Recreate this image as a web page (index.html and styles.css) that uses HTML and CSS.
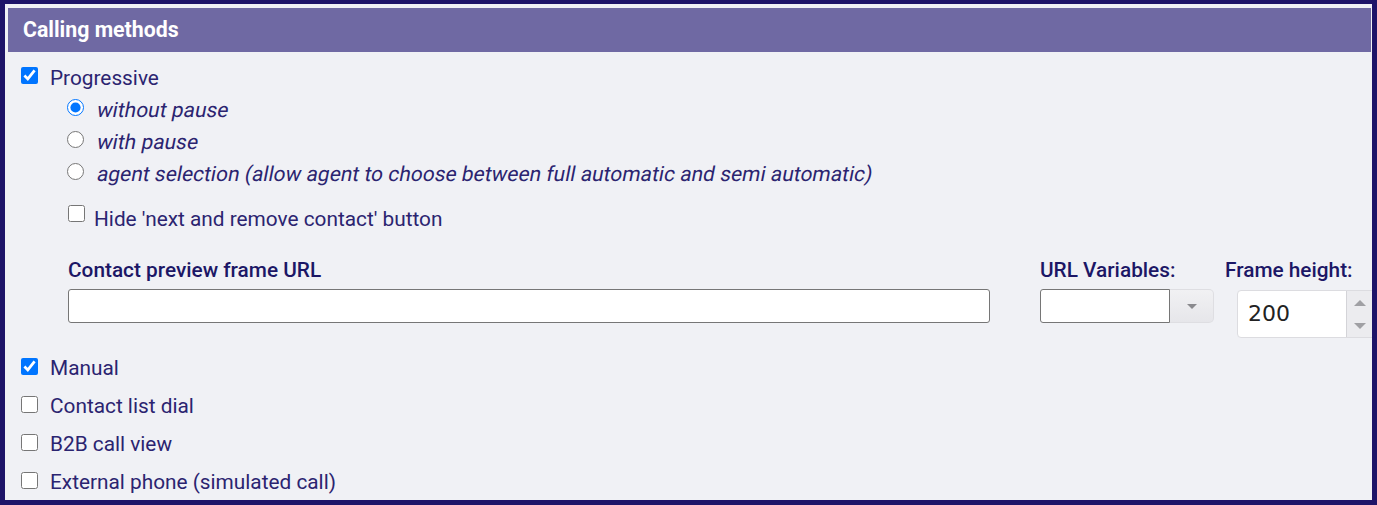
FILE: index.html
```html
<!DOCTYPE html>
<html lang="en">
<head>
    <meta charset="UTF-8">
    <meta name="viewport" content="width=device-width, initial-scale=1.0">
    <title>Calling methods</title>
    <link rel="stylesheet" href="styles.css">
</head>
<body>

<div class="panel">
    <div class="panel-header">Calling methods</div>

    <div class="panel-body">
        <label class="option">
            <input type="checkbox" checked>
            <span>Progressive</span>
        </label>

        <div class="sub-options">
            <label class="option radio">
                <input type="radio" name="progressiveMode" checked>
                <span>without pause</span>
            </label>
            <label class="option radio">
                <input type="radio" name="progressiveMode">
                <span>with pause</span>
            </label>
            <label class="option radio">
                <input type="radio" name="progressiveMode">
                <span>agent selection (allow agent to choose between full automatic and semi automatic)</span>
            </label>

            <label class="option hide-next">
                <input type="checkbox">
                <span>Hide 'next and remove contact' button</span>
            </label>

            <div class="fields">
                <div class="field field-url">
                    <div class="field-label">Contact preview frame URL</div>
                    <input type="text" class="text-input">
                </div>
                <div class="field field-vars">
                    <div class="field-label">URL Variables:</div>
                    <div class="select">
                        <div class="select-value"></div>
                        <div class="select-button"><span class="caret"></span></div>
                    </div>
                </div>
                <div class="field field-height">
                    <div class="field-label">Frame height:</div>
                    <div class="number">
                        <div class="number-value">200</div>
                        <div class="number-spin">
                            <span class="spin-up"></span>
                            <span class="spin-down"></span>
                        </div>
                    </div>
                </div>
            </div>
        </div>

        <div class="methods">
            <label class="option">
                <input type="checkbox" checked>
                <span>Manual</span>
            </label>
            <label class="option">
                <input type="checkbox">
                <span>Contact list dial</span>
            </label>
            <label class="option">
                <input type="checkbox">
                <span>B2B call view</span>
            </label>
            <label class="option">
                <input type="checkbox">
                <span>External phone (simulated call)</span>
            </label>
        </div>
    </div>
</div>

</body>
</html>
```

FILE: styles.css
```css
body {
    margin: 0;
    background-color: #1e1468;
    font-family: Roboto, "Liberation Sans", Arial, sans-serif;
    color: #2b2470;
}
.panel {
    margin: 4px 5px 5px 5px;
    height: 496px;
    background-color: #f0f1f5;
    overflow: hidden;
    padding: 4px 1px 0 3px;
    box-sizing: border-box;
}
.panel-header {
    height: 44px;
    background-color: #6f69a3;
    color: #ffffff;
    font-weight: bold;
    font-size: 21.3px;
    line-height: 44px;
    padding-left: 15px;
}
.panel-body {
    padding: 10px 0 0 13px;
}
.option {
    display: flex;
    align-items: center;
    height: 32px;
    font-size: 20.8px;
    line-height: 32px;
    white-space: nowrap;
}
.option input {
    width: 17px;
    height: 17px;
    margin: 0 12px 5px 0;
    flex-shrink: 0;
}
/* slanted regular face, not the real italic */
.option.radio span {
    display: inline-block;
    letter-spacing: 0.08px;
    transform: skewX(-11deg);
    transform-origin: 0 70%;
}
.option.radio input {
    margin: 0 12px 6px 0;
}
.sub-options {
    padding-left: 46px;
}
.option.hide-next {
    margin-top: 13px;
}
.option.hide-next input {
    margin: 0 9px 11px 1px;
}
.fields {
    display: flex;
    margin-top: 19px;
}
.field {
    flex-shrink: 0;
}
.field-label {
    font-size: 20.8px;
    font-weight: 500;
    line-height: 32px;
    color: #1c1766;
    height: 35px;
}
.field-url {
    width: 922px;
    margin-left: 1px;
}
.text-input {
    display: block;
    width: 100%;
    height: 34px;
    box-sizing: border-box;
    border: 1px solid #767676;
    border-radius: 3px;
    background: #ffffff;
    margin: 0;
}
.field-vars {
    margin-left: 50px;
}
.select {
    display: flex;
    height: 34px;
}
.select-value {
    width: 130px;
    box-sizing: border-box;
    border: 1px solid #767676;
    border-radius: 3px 0 0 3px;
    background: #ffffff;
}
.select-button {
    width: 44px;
    box-sizing: border-box;
    border: 1px solid #dedee2;
    border-left: none;
    border-radius: 0 5px 5px 0;
    background: linear-gradient(#f1f1f3, #e6e6ea);
    display: flex;
    align-items: center;
    justify-content: center;
}
.caret {
    width: 0;
    height: 0;
    border-left: 5px solid transparent;
    border-right: 5px solid transparent;
    border-top: 5px solid #8a8a8e;
}
.field-height {
    margin-left: 11px;
}
.number {
    display: flex;
    margin: 1px 0 0 12px;
    height: 48px;
    width: 150px;
    box-sizing: border-box;
    border: 1px solid #dcdce0;
    border-radius: 4px;
    background: #ffffff;
}
.number-value {
    width: 98px;
    padding-left: 10px;
    font-family: "DejaVu Sans", Verdana, sans-serif;
    font-size: 22px;
    line-height: 46px;
    color: #222222;
}
.number-spin {
    width: 26px;
    border-left: 1px solid #d4d4d8;
    background: #ececef;
    display: flex;
    flex-direction: column;
    justify-content: space-around;
    align-items: center;
}
.spin-up {
    width: 0;
    height: 0;
    border-left: 6px solid transparent;
    border-right: 6px solid transparent;
    border-bottom: 6px solid #a0a0a4;
}
.spin-down {
    width: 0;
    height: 0;
    border-left: 6px solid transparent;
    border-right: 6px solid transparent;
    border-top: 6px solid #a0a0a4;
}
.methods {
    margin-top: 11px;
}
.methods .option {
    height: 38px;
}
.methods .option input {
    margin-bottom: 4px;
}
```
